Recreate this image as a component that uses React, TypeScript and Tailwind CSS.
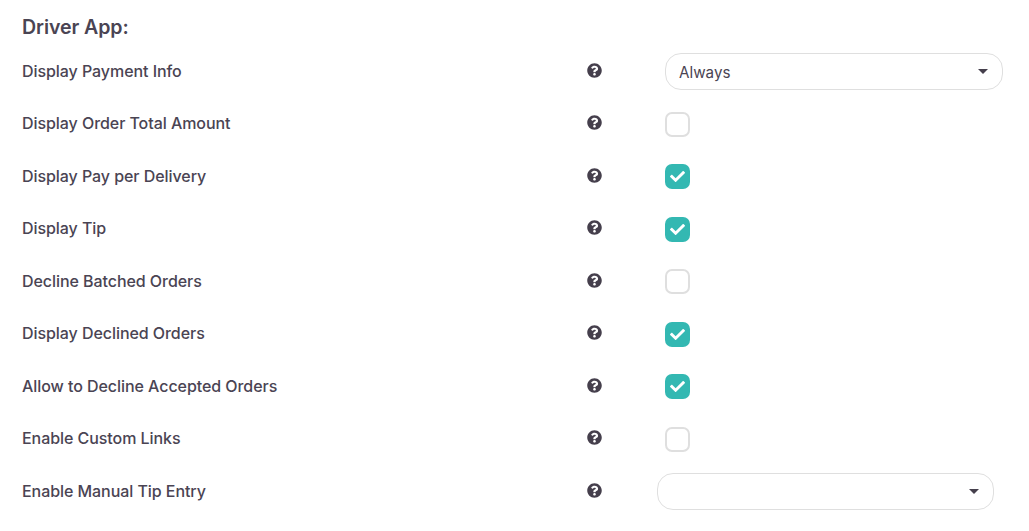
import { FaCheck, FaQuestionCircle } from "react-icons/fa";

type Row = { label: string; kind: "select" | "check" | "empty"; value?: string };

const rows: Row[] = [
  { label: "Display Payment Info", kind: "select", value: "Always" },
  { label: "Display Order Total Amount", kind: "empty" },
  { label: "Display Pay per Delivery", kind: "check" },
  { label: "Display Tip", kind: "check" },
  { label: "Decline Batched Orders", kind: "empty" },
  { label: "Display Declined Orders", kind: "check" },
  { label: "Allow to Decline Accepted Orders", kind: "check" },
  { label: "Enable Custom Links", kind: "empty" },
  { label: "Enable Manual Tip Entry", kind: "select" },
];

function Select({ value, last }: { value?: string; last: boolean }) {
  return (
    <div
      className={`mt-[2px] flex h-[37px] items-center justify-between rounded-[16px] border border-[#dfdfdf] bg-white pl-[13px] pr-[14px] ${
        last ? "ml-[-8px] w-[337px]" : "w-[338px]"
      }`}
    >
      <span className="mt-[1px] text-[15.2px] leading-none text-[#4a4453]">{value}</span>
      <span className="h-0 w-0 border-x-[5px] border-t-[5px] border-x-transparent border-t-[#453f4c]" />
    </div>
  );
}

function Checkbox({ checked }: { checked: boolean }) {
  if (checked) {
    return (
      <div className="mt-[2px] flex h-[25px] w-[25px] items-center justify-center rounded-[7px] bg-[#33b8b2] text-white">
        <FaCheck className="h-[15px] w-[15px]" />
      </div>
    );
  }
  return <div className="mt-[2px] h-[25px] w-[25px] rounded-[7px] border-2 border-[#dfdfdf] bg-white" />;
}

export default function App() {
  return (
    <div className="h-[531px] w-[1029px] overflow-hidden bg-white pl-[22px] pt-[10px] font-['Inter','Liberation_Sans',sans-serif] text-[#4a4453]">
      <h2 className="h-[34.5px] text-[19.6px] font-semibold leading-[34px] tracking-[-0.1px]">Driver App:</h2>
      <div>
        {rows.map((row, i) => (
          <div key={row.label} className="flex h-[52.5px] items-center">
            <div className="w-[565px] text-[16px] font-medium leading-none tracking-[-0.06px]">{row.label}</div>
            <div className="mt-[-1px] w-[78px]">
              <FaQuestionCircle className="h-[15px] w-[15px] text-[#453f4c]" />
            </div>
            {row.kind === "select" ? (
              <Select value={row.value} last={i === rows.length - 1} />
            ) : (
              <Checkbox checked={row.kind === "check"} />
            )}
          </div>
        ))}
      </div>
    </div>
  );
}
